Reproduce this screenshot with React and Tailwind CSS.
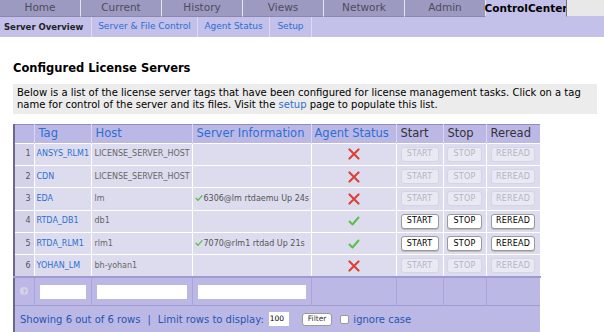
import React from 'react';

const tabs = ['Home', 'Current', 'History', 'Views', 'Network', 'Admin'];

const rows = [
  { n: 1, tag: 'ANSYS_RLM1', host: 'LICENSE_SERVER_HOST', info: '', ok: false },
  { n: 2, tag: 'CDN', host: 'LICENSE_SERVER_HOST', info: '', ok: false },
  { n: 3, tag: 'EDA', host: 'lm', info: '6306@lm rtdaemu Up 24s', ok: false },
  { n: 4, tag: 'RTDA_DB1', host: 'db1', info: '', ok: true },
  { n: 5, tag: 'RTDA_RLM1', host: 'rlm1', info: '7070@rlm1 rtdad Up 21s', ok: true },
  { n: 6, tag: 'YOHAN_LM', host: 'bh-yohan1', info: '', ok: false },
];

function Cross() {
  return (
    <svg width="12" height="12" viewBox="0 0 12 12" className="mx-auto">
      <path d="M1.5 1.5 L10.5 10.5 M10.5 1.5 L1.5 10.5" stroke="#d9443a" strokeWidth="2.2" strokeLinecap="round" />
    </svg>
  );
}

function Check({ small }) {
  return (
    <svg width={small ? 8 : 12} height={small ? 8 : 12} viewBox="0 0 12 12" className={small ? 'inline-block mr-[1px]' : 'mx-auto'}>
      <path d="M1.5 6.5 L4.5 9.5 L10.5 2.5" stroke="#5cbf4a" strokeWidth="2" fill="none" strokeLinecap="round" strokeLinejoin="round" />
    </svg>
  );
}

function Btn({ label, on, w }) {
  return (
    <button
      className={`${w} h-[15px] rounded-[3px] text-[8px] leading-none tracking-wide ${on ? 'bg-white border border-[#9a9a9a] text-black shadow-[0_1px_0_#bbb]' : 'border border-[#d4d4e2] text-[#b4b4c4] bg-[#e9e9f3]'}`}
    >
      {label}
    </button>
  );
}

export default function App() {
  return (
    <div className="w-[604px] h-[332px] overflow-hidden bg-white font-['DejaVu_Sans',Verdana,sans-serif]">
      {/* top tabs */}
      <div className="flex h-[17px] bg-[#e8e8e8]">
        {tabs.map((t) => (
          <div key={t} className="w-[81px] h-[17px] bg-[#9d9ac1] border-r border-[#e4e4ee] border-b border-b-[#8a87b0] flex items-center justify-center text-[10.5px] text-[#4c4c5c]">
            {t}
          </div>
        ))}
        <div className="w-[80px] h-[17px] bg-[#c3c0ea] flex items-center justify-center text-[10.5px] font-bold text-black">
          ControlCenter
        </div>
        <div className="flex-1 border-l border-[#777] border-b border-b-[#c3c0ea] bg-[#e8e8e8]" />
      </div>

      {/* sub nav */}
      <div className="flex h-[20px] bg-[#c3c0ea] text-[9px] items-center">
        <div className="w-[92px] h-full flex items-center pl-[4px] font-bold text-[8.5px] text-[#222] border-r border-[#dcdaf4]">Server Overview</div>
        <div className="w-[106px] h-full flex items-center justify-center text-[#2b6fd1] border-r border-[#dcdaf4]">Server &amp; File Control</div>
        <div className="w-[72px] h-full flex items-center justify-center text-[#2b6fd1] border-r border-[#dcdaf4]">Agent Status</div>
        <div className="w-[42px] h-full flex items-center justify-center text-[#2b6fd1] border-r border-[#dcdaf4]">Setup</div>
      </div>

      <div className="pl-[13px] pr-[7px]">
        <h1 className="mt-[26px] text-[11.5px] font-bold text-black leading-none">Configured License Servers</h1>

        <div className="mt-[9px] bg-[#ececec] px-[4px] py-[3px] text-[10px] leading-[12px] text-black whitespace-nowrap">
          Below is a list of the license server tags that have been configured for license management tasks. Click on a tag
          <br />
          name for control of the server and its files. Visit the <span className="text-[#2b6fd1]">setup</span> page to populate this list.
        </div>

        <table className="mt-[10px] w-[526px] table-fixed border-collapse border-l-2 border-[#6b6890] text-[8px]">
          <colgroup>
            <col className="w-[20px]" />
            <col className="w-[57px]" />
            <col className="w-[101px]" />
            <col className="w-[119px]" />
            <col className="w-[85px]" />
            <col className="w-[47px]" />
            <col className="w-[43px]" />
            <col className="w-[54px]" />
          </colgroup>
          <thead>
            <tr className="h-[19px] bg-[#bcb8e6] text-[11.5px] font-normal text-left border-t border-[#8f8cbf]">
              <th className="border-r border-[#d8d6f2]"></th>
              <th className="px-[4px] font-normal text-[#2b6fd1] border-r border-[#d8d6f2]">Tag</th>
              <th className="px-[4px] font-normal text-[#2b6fd1] border-r border-[#d8d6f2]">Host</th>
              <th className="px-[4px] font-normal text-[#2b6fd1] border-r border-[#d8d6f2] whitespace-nowrap">Server Information</th>
              <th className="px-[3px] font-normal text-[#2b6fd1] border-r border-[#d8d6f2] whitespace-nowrap">Agent Status</th>
              <th className="px-[4px] font-normal text-[#333] border-r border-[#d8d6f2]">Start</th>
              <th className="px-[4px] font-normal text-[#333] border-r border-[#d8d6f2]">Stop</th>
              <th className="px-[4px] font-normal text-[#333]">Reread</th>
            </tr>
          </thead>
          <tbody>
            {rows.map((r) => (
              <tr key={r.n} className="h-[22.4px] bg-[#dddcee]">
                <td className="text-right pr-[3px] text-[#555] bg-[#d4d2e8] border border-white">{r.n}</td>
                <td className="px-[2px] text-[#2b6fd1] border border-white whitespace-nowrap overflow-hidden">{r.tag}</td>
                <td className="px-[3px] text-[#666] border border-white whitespace-nowrap overflow-hidden">{r.host}</td>
                <td className="px-[2px] text-[#555] border border-white whitespace-nowrap">
                  {r.info && <Check small />}
                  {r.info}
                </td>
                <td className="border border-white">{r.ok ? <Check /> : <Cross />}</td>
                <td className="text-center border border-white"><Btn label="START" on={r.ok} w="w-[38px]" /></td>
                <td className="text-center border border-white"><Btn label="STOP" on={r.ok} w="w-[35px]" /></td>
                <td className="text-center border border-white"><Btn label="REREAD" on={r.ok} w="w-[44px]" /></td>
              </tr>
            ))}
            <tr className="h-[28px] bg-[#bcb8e6] border-t-2 border-[#9e9bd0]">
              <td className="text-center border-r border-[#a8a5d8]">
                <span className="inline-flex w-[8px] h-[8px] rounded-full bg-[#d4d2e8] text-[6px] text-[#9e9bc0] items-center justify-center">?</span>
              </td>
              <td className="px-[5px] border-r border-[#a8a5d8]"><div className="h-[14px] bg-white" /></td>
              <td className="px-[5px] border-r border-[#a8a5d8]"><div className="h-[14px] bg-white" /></td>
              <td className="px-[5px] border-r border-[#a8a5d8]"><div className="h-[14px] bg-white" /></td>
              <td className="border-r border-[#a8a5d8]"></td>
              <td className="border-r border-[#a8a5d8]"></td>
              <td className="border-r border-[#a8a5d8]"></td>
              <td></td>
            </tr>
            <tr className="h-[27px] bg-[#bcb8e6] border-t border-[#9e9bd0]">
              <td colSpan={8} className="pl-[5px]">
                <div className="flex items-center text-[10px] text-[#2456b0] whitespace-nowrap">
                  <span>Showing 6 out of 6 rows</span>
                  <span className="mx-[7px]">|</span>
                  <span>Limit rows to display:</span>
                  <span className="ml-[5px] w-[20px] h-[14px] bg-white text-black text-[7.5px] flex items-center pl-[1px]">100</span>
                  <span className="ml-[13px] px-[5px] h-[13px] bg-white rounded-[3px] border border-[#999] text-[#333] text-[7.5px] flex items-center">Filter</span>
                  <span className="ml-[8px] w-[9px] h-[9px] bg-white rounded-[2px] border border-[#999]" />
                  <span className="ml-[4px]">ignore case</span>
                </div>
              </td>
            </tr>
          </tbody>
        </table>
      </div>
    </div>
  );
}
